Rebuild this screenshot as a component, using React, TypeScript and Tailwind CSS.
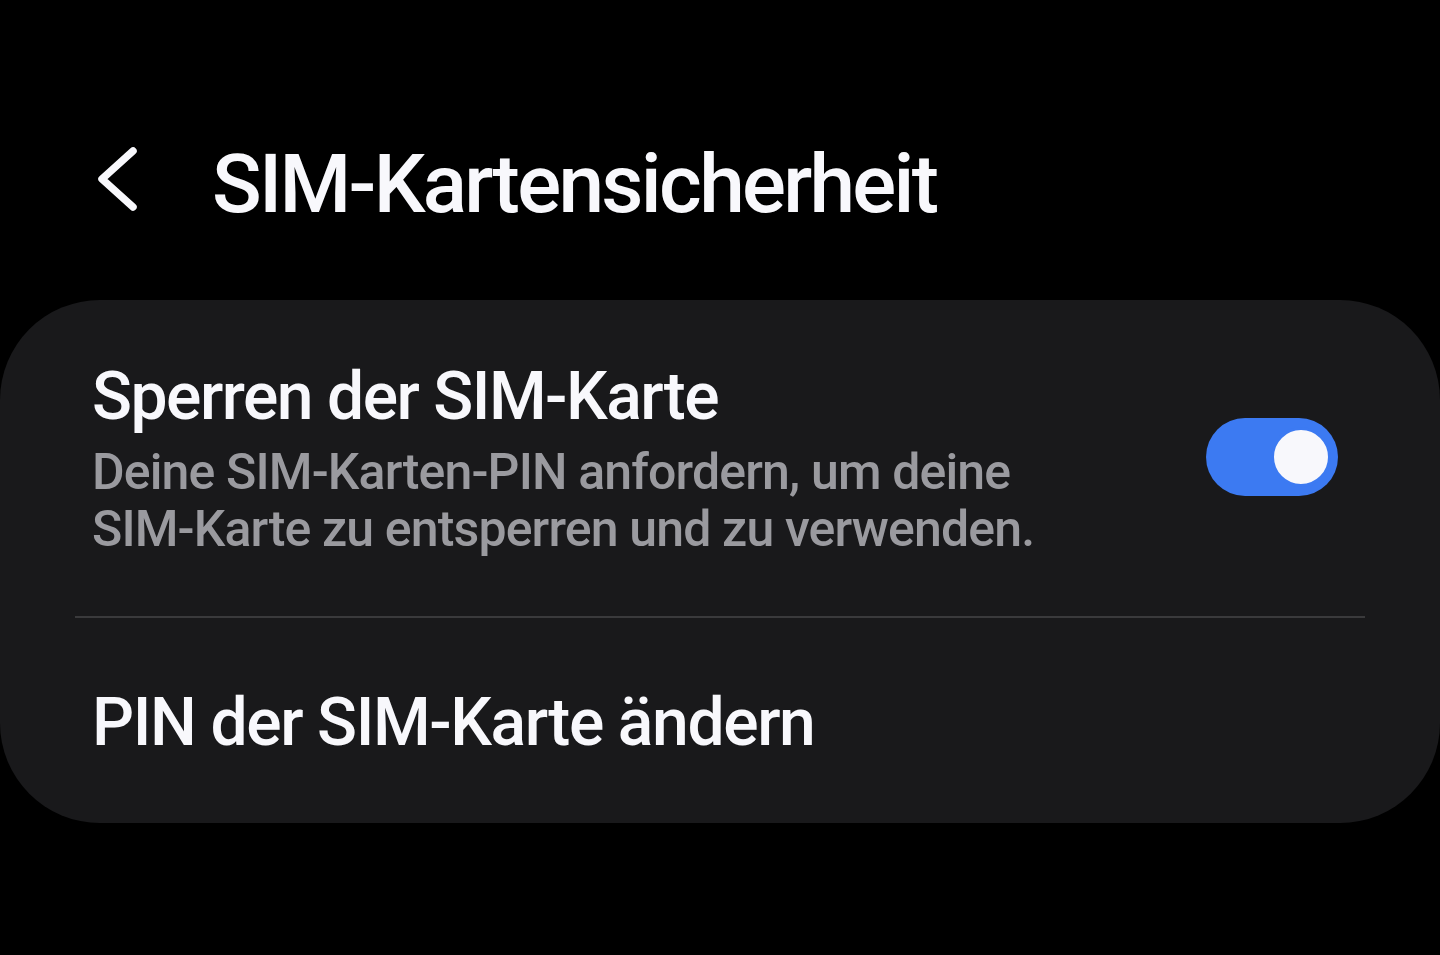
import React, { useState } from "react";

const font = { fontFamily: "Roboto, 'Noto Sans', sans-serif" };

const BackIcon = () => (
  <svg width="48" height="68" viewBox="0 0 48 68" fill="none">
    <path
      d="M41 6 L10 34 L41 62"
      stroke="#f8f8fc"
      strokeWidth="7.5"
      strokeLinecap="round"
      strokeLinejoin="round"
    />
  </svg>
);

const Toggle = ({ on, onClick }: { on: boolean; onClick: () => void }) => (
  <button
    onClick={onClick}
    className={`relative w-[132px] h-[78px] rounded-full shrink-0 -mt-[6px] ${
      on ? "bg-[#3c7af2]" : "bg-[#5a5a5e]"
    }`}
  >
    <span
      className={`absolute top-[9px] w-[60px] h-[60px] rounded-full bg-[#f8f8fc] border-[3px] border-[#3c7af2] ${
        on ? "left-[65px]" : "left-[7px]"
      }`}
    />
  </button>
);

export default function App() {
  const [locked, setLocked] = useState(true);

  return (
    <div className="w-[1440px] h-[955px] bg-black overflow-hidden" style={font}>
      {/* Header */}
      <div className="h-[300px] flex items-start pt-[143px] pl-[92px]">
        <div className="w-[120px] h-[72px] flex items-center">
          <BackIcon />
        </div>
        <h1 className="text-[82px] leading-none font-medium text-[#f8f8fc] tracking-[-2.7px]">
          SIM-Kartensicherheit
        </h1>
      </div>

      {/* Settings card */}
      <div className="bg-[#19191b] rounded-[100px] h-[523px] flex flex-col">
        <div className="h-[316px] flex items-center justify-between pl-[92px] pr-[102px] pt-[4px]">
          <div className="flex flex-col">
            <div className="text-[66px] leading-[70px] font-medium text-[#f8f8fc] tracking-[-1.5px]">
              Sperren der SIM-Karte
            </div>
            <div className="text-[50px] leading-[57px] font-medium text-[#9a9a9f] mt-[12px] tracking-[-0.85px]">
              Deine SIM-Karten-PIN anfordern, um deine
              <br />
              SIM-Karte zu entsperren und zu verwenden.
            </div>
          </div>
          <Toggle on={locked} onClick={() => setLocked(!locked)} />
        </div>
        <div className="mx-[75px] h-[2px] bg-[#3a3a3c]" />
        <div className="flex-1 flex items-center pl-[92px] pt-[4px]">
          <div className="text-[66px] leading-none font-medium text-[#f8f8fc] tracking-[-1.4px]">
            PIN der SIM-Karte ändern
          </div>
        </div>
      </div>
    </div>
  );
}
